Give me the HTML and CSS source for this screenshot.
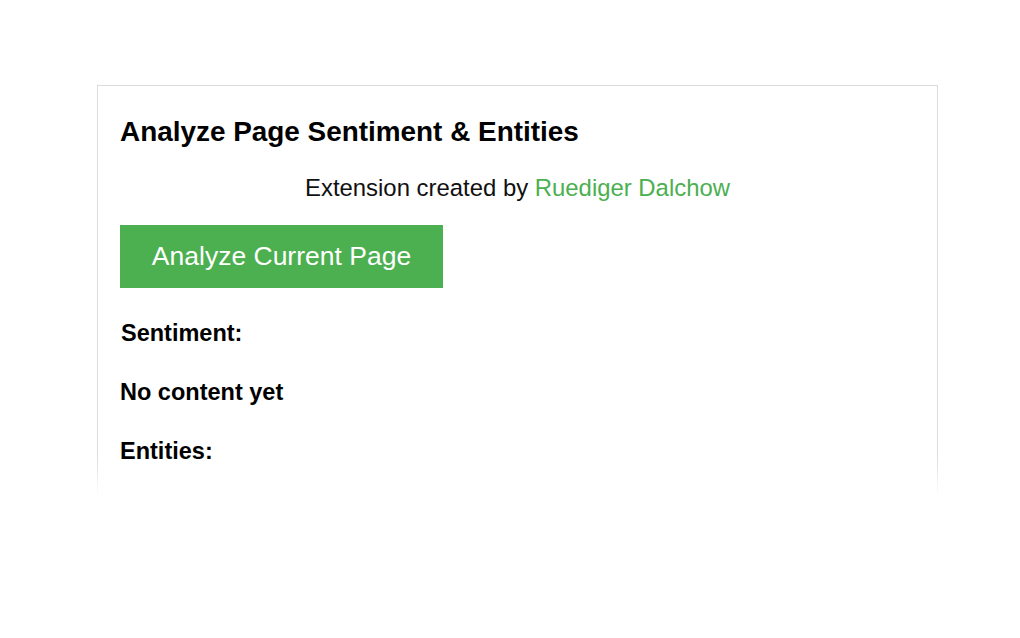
FILE: index.html
```html
<!DOCTYPE html>
<html>
<head>
<meta charset="utf-8">
<link rel="stylesheet" href="styles.css">
</head>
<body>
<div class="page">
  <div class="panel">
    <h1 class="title">Analyze Page Sentiment &amp; Entities</h1>
    <p class="credit">Extension created by <a class="link" href="#">Ruediger Dalchow</a></p>
    <button class="analyze">Analyze Current Page</button>
    <div class="label first">Sentiment:</div>
    <div class="label">No content yet</div>
    <div class="label">Entities:</div>
  </div>
</div>
</body>
</html>
```
FILE: styles.css
```css
html, body {
  margin: 0;
  padding: 0;
  background: #fff;
  font-family: "Liberation Sans", Arial, sans-serif;
  color: #000;
}
.page {
  padding: 85px 0 0 97px;
}
.panel {
  box-sizing: border-box;
  width: 841px;
  padding: 30px 22px 32px 22px;
  border-style: solid;
  border-width: 1px 1px 0 1px;
  border-image: linear-gradient(to bottom, #dcdcdc 0%, #dcdcdc 90%, rgba(220,220,220,0) 100%) 1;
  display: flex;
  flex-direction: column;
  align-items: flex-start;
}
.title {
  margin: 0;
  font-size: 27.9px;
  line-height: 32px;
  font-weight: bold;
}
.credit {
  margin: 26px 0 0 0;
  align-self: stretch;
  text-align: center;
  font-size: 23.9px;
  line-height: 28px;
  color: #111;
}
.link {
  color: #4CAF50;
  text-decoration: none;
}
.analyze {
  margin-top: 23px;
  width: 323px;
  height: 63px;
  border: none;
  background: #4CAF50;
  color: #fff;
  font-family: "Liberation Sans", Arial, sans-serif;
  font-size: 26.5px;
  padding: 0;
}
.label {
  margin-top: 31px;
  font-size: 23.5px;
  line-height: 28px;
  font-weight: bold;
}
.label.first {
  padding-left: 1px;
}
```
